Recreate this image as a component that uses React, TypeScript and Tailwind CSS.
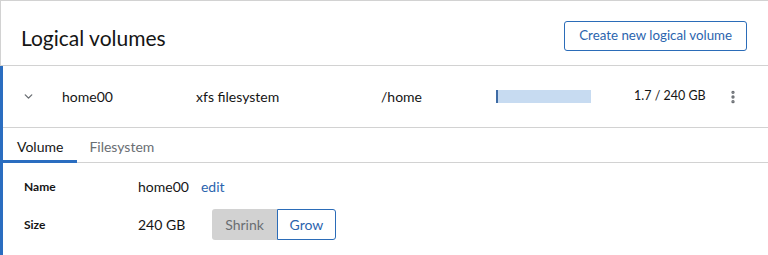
import { ChevronDown, EllipsisVertical } from "lucide-react";

const font = { fontFamily: "Lato, 'Liberation Sans', sans-serif" };

function UsageBar({ used, total }: { used: number; total: number }) {
  const pct = Math.max((used / total) * 100, 2);
  return (
    <div className="h-[13px] w-[95px] bg-[#c7dbf1]">
      <div className="h-full bg-[#3e6ba5]" style={{ width: `${Math.min(pct, 100)}%` }} />
    </div>
  );
}

export default function App() {
  return (
    <div className="flex h-[255px] w-[768px] flex-col overflow-hidden bg-white text-[#151515]" style={font}>
      <div className="flex h-[66px] shrink-0 items-center justify-between border-l border-t border-b border-[#d2d2d2] pl-[20px] pr-[21px] pt-[6px]">
        <h2 className="pt-[2px] text-[21px] leading-none">Logical volumes</h2>
        <button
          type="button"
          className="flex h-[30px] items-center rounded-[3px] border border-[#2b6cb8] px-[14px] text-[13.3px] text-[#2b64ae]"
        >
          Create new logical volume
        </button>
      </div>

      <div className="flex-1 border-l-[3px] border-[#2a6dc0]">
        <div className="flex h-[62px] items-center border-b border-[#d2d2d2] text-[14px]">
          <div className="flex w-[59px] pl-[19px]">
            <ChevronDown className="size-[13px] text-[#6a6e73]" strokeWidth={2.5} />
          </div>
          <div className="w-[134px]">home00</div>
          <div className="w-[185px]">xfs filesystem</div>
          <div className="w-[115px]">/home</div>
          <UsageBar used={1.7} total={240} />
          <div className="ml-[43px] w-[91px] text-[12.5px]">1.7 / 240 GB</div>
          <EllipsisVertical className="size-[16px] text-[#6a6e73]" strokeWidth={3} />
        </div>

        <div className="flex h-[35px] items-stretch border-b border-[#d2d2d2] text-[14px]">
          <div className="-mb-px flex items-center border-b-[3px] border-[#2a6dc0] px-[14px] pt-[5px]">Volume</div>
          <div className="flex items-center px-[12px] pt-[2px] text-[#6a6e73]">Filesystem</div>
        </div>

        <div className="grid grid-cols-[114px_1fr] items-center gap-y-[7px] pl-[21px] pt-[8px] text-[14px]">
          <div className="text-[12px] font-bold">Name</div>
          <div className="flex h-[31px] items-center gap-[12px]">
            <span>home00</span>
            <span className="text-[#2b64ae]">edit</span>
          </div>
          <div className="text-[12px] font-bold">Size</div>
          <div className="flex items-center">
            <span className="w-[74px]">240 GB</span>
            <div className="flex h-[31px]">
              <button type="button" className="w-[65px] rounded-l-[3px] bg-[#d2d2d2] text-[#6a6e73]">
                Shrink
              </button>
              <button
                type="button"
                className="w-[59px] rounded-r-[3px] border border-[#2b6cb8] text-[#2b64ae]"
              >
                Grow
              </button>
            </div>
          </div>
        </div>
      </div>
    </div>
  );
}
